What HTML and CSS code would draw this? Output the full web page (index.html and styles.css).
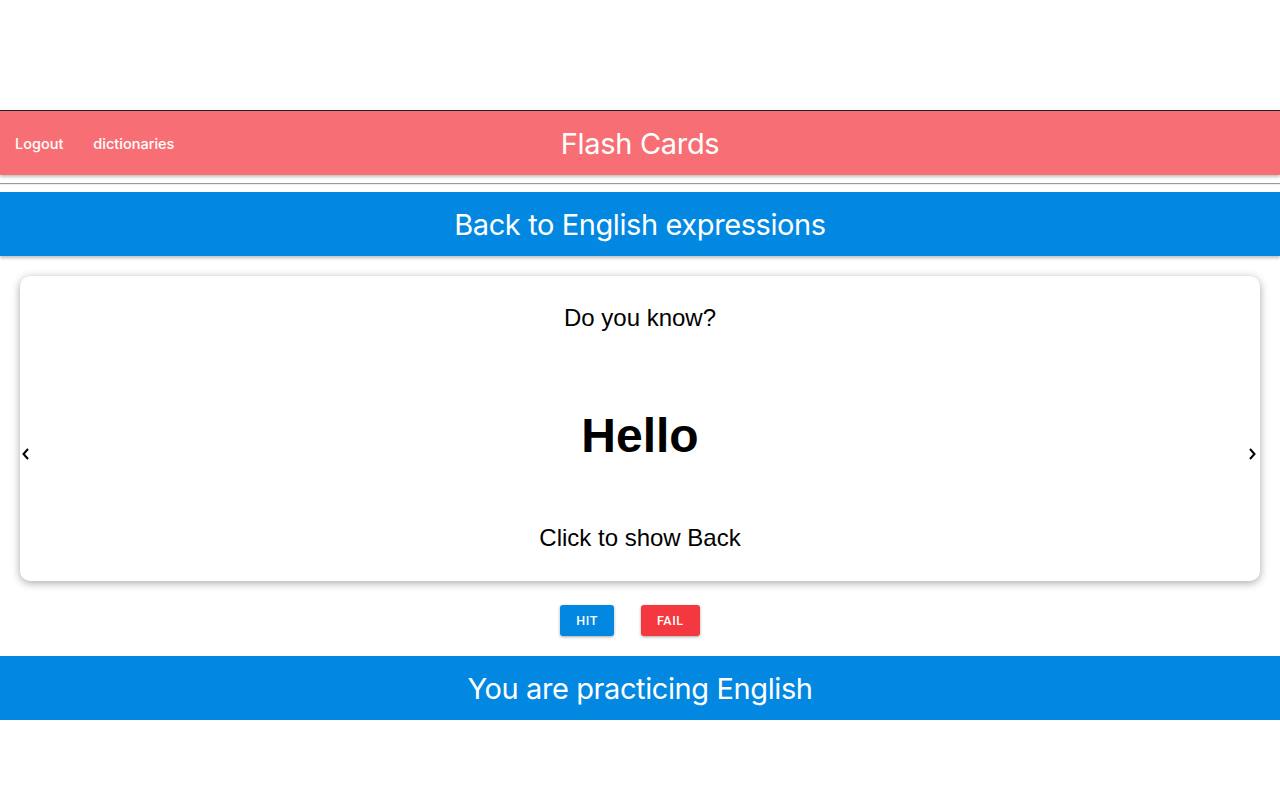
FILE: index.html
```html
<!DOCTYPE html>
<html>
<head>
    <title>Flash Cards</title>
    <link rel="stylesheet" href="styles.css">
</head>
<body>
    <div class="top-space"></div>
    <nav class="navbar">
        <div class="nav-links">
            <a href="#">Logout</a>
            <a href="#">dictionaries</a>
        </div>
        <div class="brand">Flash Cards</div>
    </nav>
    <hr class="divider">
    <div class="banner">Back to English expressions</div>
    <div class="card">
        <svg class="arrow arrow-left" width="10" height="14" viewBox="0 0 10 14">
            <polyline points="7,2 2.5,7 7,12" fill="none" stroke="#000" stroke-width="2"/>
        </svg>
        <div class="question">Do you know?</div>
        <div class="word">Hello</div>
        <div class="hint">Click to show Back</div>
        <svg class="arrow arrow-right" width="10" height="14" viewBox="0 0 10 14">
            <polyline points="3,2 7.5,7 3,12" fill="none" stroke="#000" stroke-width="2"/>
        </svg>
    </div>
    <div class="actions">
        <button type="button" class="hitBtn">Hit</button>
        <button type="button" class="failBtn">Fail</button>
    </div>
    <div class="banner">You are practicing English</div>
</body>
</html>
```

FILE: styles.css
```css
body {
    margin: 0;
    background-color: #ffffff;
    font-family: Inter, "Noto Sans", sans-serif;
}

.top-space {
    height: 110px;
}

.navbar {
    position: relative;
    display: flex;
    align-items: center;
    justify-content: center;
    height: 64px;
    border-top: 1px solid #222222;
    background-color: #f76f75;
    box-shadow: 0 2px 3px rgba(0, 0, 0, 0.25);
    color: #ffffff;
}

.nav-links {
    position: absolute;
    left: 15px;
    top: 0;
    height: 64px;
    display: flex;
    align-items: center;
    gap: 30px;
}

.nav-links a {
    color: #ffffff;
    text-decoration: none;
    font-size: 14.5px;
    font-weight: 500;
}

.brand {
    font-size: 29px;
    letter-spacing: -0.3px;
}

.divider {
    margin: 8px 0 7px 0;
    border: none;
    border-top: 1px solid #9a9a9a;
    border-bottom: 1px solid #eeeeee;
}

.banner {
    height: 64px;
    display: flex;
    align-items: center;
    justify-content: center;
    background-color: #0288e1;
    color: #ffffff;
    font-size: 29px;
    letter-spacing: -0.4px;
    box-shadow: 0 2px 3px rgba(0, 0, 0, 0.25);
}

.card {
    position: relative;
    margin: 20px 20px 0 20px;
    height: 305px;
    box-sizing: border-box;
    padding-top: 28px;
    border-radius: 10px;
    background-color: #ffffff;
    box-shadow: 0 2px 8px rgba(0, 0, 0, 0.35);
    text-align: center;
    font-family: "Liberation Sans", Arial, sans-serif;
    color: #000000;
}

.question {
    font-size: 24px;
    line-height: 28px;
}

.word {
    margin-top: 76px;
    font-size: 48px;
    line-height: 56px;
    font-weight: bold;
}

.hint {
    margin-top: 60px;
    font-size: 24px;
    line-height: 28px;
}

.arrow {
    position: absolute;
    top: 171px;
}

.arrow-left {
    left: 1px;
}

.arrow-right {
    right: 3px;
}

.actions {
    display: flex;
    justify-content: center;
    gap: 27px;
    padding: 24px 20px 20px 0;
}

.hitBtn, .failBtn {
    height: 31px;
    padding: 0 16px;
    border: none;
    border-radius: 3px;
    color: #ffffff;
    font-family: Roboto, sans-serif;
    font-size: 12.5px;
    font-weight: 500;
    letter-spacing: 0.6px;
    text-transform: uppercase;
    box-shadow: 0 1px 3px rgba(0, 0, 0, 0.35);
    cursor: pointer;
}

.hitBtn {
    background-color: #0288e1;
}

.failBtn {
    background-color: #f3393f;
}
```
